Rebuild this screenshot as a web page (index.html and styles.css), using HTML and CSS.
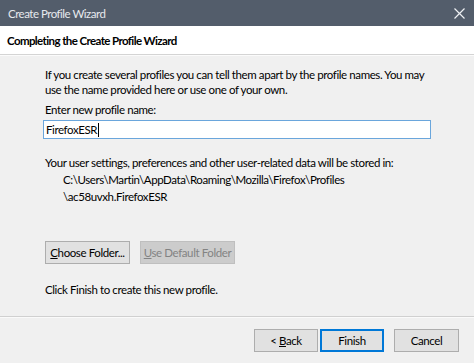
FILE: index.html
```html
<!DOCTYPE html>
<html>
<head>
<meta charset="utf-8">
<link rel="stylesheet" href="styles.css">
</head>
<body>
<div class="window">
  <div class="titlebar">
    <span class="title">Create Profile Wizard</span>
    <svg class="close" width="11" height="11" viewBox="0 0 11 11"><path d="M0.5 0.5 L10.5 10.5 M10.5 0.5 L0.5 10.5" stroke="#eef0f3" stroke-width="1.2"/></svg>
  </div>
  <div class="header">Completing the Create Profile Wizard</div>
  <div class="content">
    <p class="intro">If you create several profiles you can tell them apart by the profile names. You may<br>use the name provided here or use one of your own.</p>
    <p class="label">Enter new profile name:</p>
    <div class="input"><span>FirefoxESR</span><span class="caret"></span></div>
    <p class="stored">Your user settings, preferences and other user-related data will be stored in:</p>
    <p class="path">C:\Users\Martin\AppData\Roaming\Mozilla\Firefox\Profiles<br>\ac58uvxh.FirefoxESR</p>
    <div class="folder-buttons">
      <div class="btn choose"><span><u>C</u>hoose Folder...</span></div>
      <div class="btn disabled"><span><u>U</u>se Default Folder</span></div>
    </div>
    <p class="finish-note">Click Finish to create this new profile.</p>
  </div>
  <div class="footer">
    <div class="btn nav"><span>&lt; <u>B</u>ack</span></div>
    <div class="btn nav default"><span>Finish</span></div>
    <div class="btn nav cancel"><span>Cancel</span></div>
  </div>
</div>
</body>
</html>
```
FILE: styles.css
```css
html, body {
  margin: 0;
  padding: 0;
}
body {
  width: 474px;
  height: 363px;
  overflow: hidden;
  font-family: "Lato", "Open Sans", sans-serif;
  font-size: 11.5px;
  letter-spacing: -0.4px;
  color: #000;
  background: #f0f0f0;
}
.window {
  display: flex;
  flex-direction: column;
  height: 363px;
}
.titlebar {
  height: 26px;
  background: #535d6b;
  display: flex;
  align-items: center;
  justify-content: space-between;
  padding: 0 9px 0 8px;
  box-sizing: border-box;
}
.title {
  color: #e6e9ee;
  font-size: 11.5px;
  letter-spacing: -0.5px;
}
.close {
  display: block;
}
.header {
  height: 29px;
  background: #ffffff;
  border-bottom: 1px solid #d4d4d4;
  box-shadow: 0 1px 0 #fbfbfb;
  font-weight: bold;
  font-size: 11.5px;
  letter-spacing: -0.6px;
  display: flex;
  align-items: center;
  padding-left: 7px;
  box-sizing: border-box;
}
.content {
  flex: 1;
  padding: 12px 0 0 45px;
  border-bottom: 1px solid #d0d0d0;
  box-shadow: 0 1px 0 #fafafa;
}
p {
  margin: 0;
  line-height: 15px;
  white-space: nowrap;
}
.label {
  margin-top: 5px;
}
.input {
  margin: 3px 0 0 -2px;
  width: 388px;
  height: 19px;
  box-sizing: border-box;
  border: 1px solid #6aa6dc;
  background: #fff;
  display: flex;
  align-items: center;
  padding-left: 2px;
}
.caret {
  display: inline-block;
  width: 1px;
  height: 14px;
  background: #000;
  margin-left: 1px;
}
.stored {
  margin-top: 16px;
}
.path {
  margin: 1px 0 0 18px;
  line-height: 17px;
}
.folder-buttons {
  display: flex;
  gap: 10px;
  margin: 36px 0 0 0;
}
.btn {
  height: 23px;
  box-sizing: border-box;
  border: 1px solid #adadad;
  background: #e1e1e1;
  display: flex;
  align-items: center;
  justify-content: center;
  white-space: pre;
}
.choose {
  width: 85px;
}
.disabled {
  width: 95px;
  background: #cccccc;
  border-color: #bfbfbf;
  color: #838383;
}
.finish-note {
  margin-top: 18px;
}
.footer {
  height: 46px;
  display: flex;
  align-items: center;
  padding: 0 0 0 254px;
  box-sizing: border-box;
}
.nav {
  width: 64px;
}
.default {
  margin-left: 2px;
  border: 1px solid #0078d7;
  box-shadow: inset 0 0 0 1px #0078d7;
}
.cancel {
  margin-left: 10px;
  width: 65px;
}
```
